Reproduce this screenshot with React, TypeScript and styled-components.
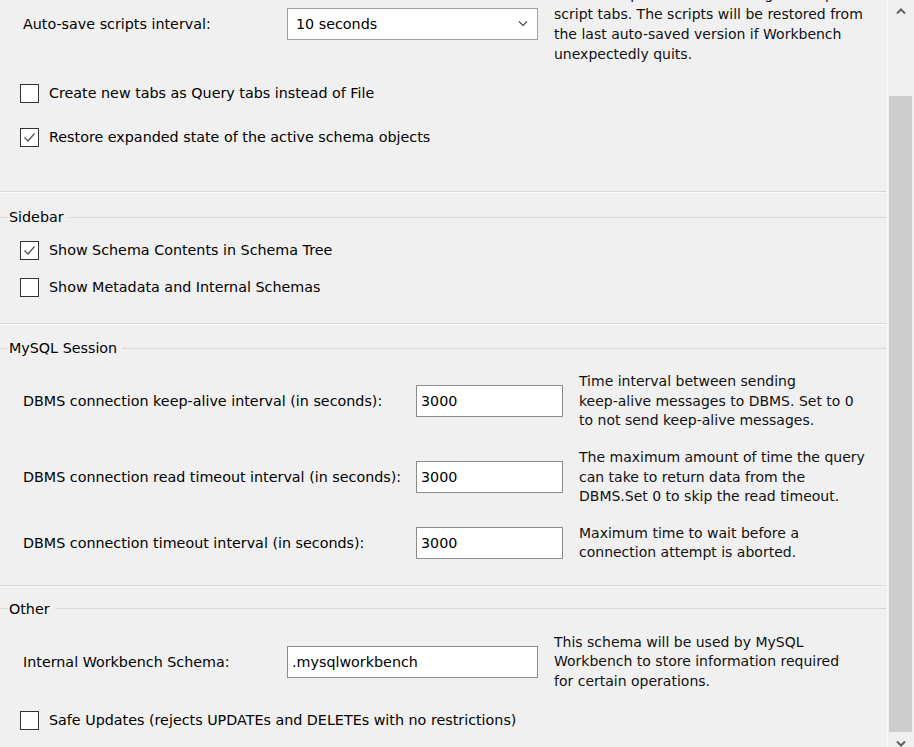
import React from "react";
import styled, { createGlobalStyle } from "styled-components";

const GlobalStyle = createGlobalStyle`
  html, body { margin: 0; padding: 0; background: #f0f0f0; overflow: hidden; }
  body {
    font-family: "DejaVu Sans", "Liberation Sans", sans-serif;
    font-size: 14.3px;
    color: #000;
  }
`;

const LINE = "#d9d9d9";

const Window = styled.div`
  display: flex;
  width: 914px;
  height: 755px;
  background: #f0f0f0;
`;

const Viewport = styled.div`
  flex: 1;
  min-width: 0;
  overflow: hidden;
`;

const Content = styled.div<{ $offset: number }>`
  margin-top: ${(p) => -p.$offset}px;
  width: 886px;
  display: flex;
  flex-direction: column;
`;

const Group = styled.section<{ $pb: number }>`
  display: flex;
  flex-direction: column;
  padding-bottom: ${(p) => p.$pb}px;
  border-bottom: 1px solid ${LINE};
  box-shadow: 0 1px 0 #fafafa;
`;

const GroupHeader = styled.div<{ $mt: number }>`
  display: flex;
  align-items: center;
  height: 20px;
  margin-top: ${(p) => p.$mt}px;
  &::before {
    content: "";
    width: 8px;
    border-top: 1px solid ${LINE};
  }
  &::after {
    content: "";
    flex: 1;
    border-top: 1px solid ${LINE};
  }
`;

const GroupTitle = styled.span`
  padding: 0 5px 0 1px;
  white-space: nowrap;
`;

const FormRow = styled.div<{ $mt: number; $label: number; $input: number }>`
  display: grid;
  grid-template-columns: ${(p) => p.$label}px ${(p) => p.$input}px 1fr;
  column-gap: 16px;
  align-items: center;
  padding-left: 23px;
  margin-top: ${(p) => p.$mt}px;
`;

const Label = styled.span`
  white-space: nowrap;
`;

const TextBox = styled.div`
  box-sizing: border-box;
  height: 32px;
  background: #fff;
  border: 1px solid #8a8a8a;
  display: flex;
  align-items: center;
  padding-left: 4px;
  white-space: nowrap;
`;

const ComboBox = styled(TextBox)`
  border-color: #a0a0a0;
  padding: 0 9px 0 8px;
  justify-content: space-between;
`;

const Description = styled.div<{ $lh: number }>`
  font-size: 14px;
  line-height: ${(p) => p.$lh}px;
  color: #111;
  & > span {
    display: block;
    white-space: nowrap;
  }
`;

const CheckRow = styled.label<{ $mt: number }>`
  display: flex;
  align-items: center;
  gap: 10px;
  height: 20px;
  padding-left: 20px;
  margin-top: ${(p) => p.$mt}px;
  white-space: nowrap;
`;

const Box = styled.span`
  box-sizing: border-box;
  width: 19px;
  height: 19px;
  border: 1px solid #333;
  background: #fff;
  display: flex;
  align-items: center;
  justify-content: center;
`;

const ScrollBar = styled.div`
  width: 27px;
  display: flex;
  flex-direction: column;
  background: #f0f0f0;
  border-left: 1px solid #f7f7f7;
  box-sizing: border-box;
`;

const ArrowButton = styled.div`
  height: 22px;
  display: flex;
  align-items: center;
  justify-content: center;
`;

const Track = styled.div`
  flex: 1;
  display: flex;
  flex-direction: column;
  padding: 0 2px 0 1px;
`;

const Thumb = styled.div<{ $top: number; $height: number }>`
  margin-top: ${(p) => p.$top}px;
  height: ${(p) => p.$height}px;
  background: #cdcdcd;
`;

const Check = ({ checked, children, mt }: { checked?: boolean; children: React.ReactNode; mt: number }) => (
  <CheckRow $mt={mt}>
    <Box>
      {checked && (
        <svg width="15" height="15" viewBox="0 0 15 15">
          <path d="M2.5 7.5 L6 11 L12.5 3.5" fill="none" stroke="#555" strokeWidth="1.3" />
        </svg>
      )}
    </Box>
    <span>{children}</span>
  </CheckRow>
);

const Desc = ({ lines, lh = 19.5 }: { lines: string[]; lh?: number }) => (
  <Description $lh={lh}>
    {lines.map((l) => (
      <span key={l}>{l}</span>
    ))}
  </Description>
);

const Chevron = ({ dir, color = "#606060", w = 2 }: { dir: "up" | "down"; color?: string; w?: number }) => (
  <svg width="10" height="6" viewBox="0 0 10 6">
    <path
      d={dir === "up" ? "M1 5.5 L5 1.5 L9 5.5" : "M1 0.5 L5 4.5 L9 0.5"}
      fill="none"
      stroke={color}
      strokeWidth={w}
    />
  </svg>
);

const sessionRows = [
  {
    label: "DBMS connection keep-alive interval (in seconds):",
    value: "3000",
    desc: ["Time interval between sending", "keep-alive messages to DBMS. Set to 0", "to not send keep-alive messages."],
    mt: 14,
  },
  {
    label: "DBMS connection read timeout interval (in seconds):",
    value: "3000",
    desc: ["The maximum amount of time the query", "can take to return data from the", "DBMS.Set 0 to skip the read timeout."],
    mt: 17.5,
  },
  {
    label: "DBMS connection timeout interval (in seconds):",
    value: "3000",
    desc: ["Maximum time to wait before a", "connection attempt is aborted."],
    mt: 17,
  },
];

export default function App() {
  return (
    <>
      <GlobalStyle />
      <Window>
        <Viewport>
          <Content $offset={16}>
            <Group $pb={44}>
              <FormRow $mt={0} $label={248} $input={251}>
                <Label>Auto-save scripts interval:</Label>
                <ComboBox>
                  <span>10 seconds</span>
                  <Chevron dir="down" color="#444" w={1.1} />
                </ComboBox>
                <Desc
                  lh={20}
                  lines={[
                    "interval to perform auto-saving of all open",
                    "script tabs. The scripts will be restored from",
                    "the last auto-saved version if Workbench",
                    "unexpectedly quits.",
                  ]}
                />
              </FormRow>
              <Check mt={19}>Create new tabs as Query tabs instead of File</Check>
              <Check mt={24} checked>
                Restore expanded state of the active schema objects
              </Check>
            </Group>

            <Group $pb={26}>
              <GroupHeader $mt={15}>
                <GroupTitle>Sidebar</GroupTitle>
              </GroupHeader>
              <Check mt={13} checked>
                Show Schema Contents in Schema Tree
              </Check>
              <Check mt={17}>Show Metadata and Internal Schemas</Check>
            </Group>

            <Group $pb={22}>
              <GroupHeader $mt={14}>
                <GroupTitle>MySQL Session</GroupTitle>
              </GroupHeader>
              {sessionRows.map((r) => (
                <FormRow key={r.label} $mt={r.mt} $label={377} $input={147}>
                  <Label>{r.label}</Label>
                  <TextBox>{r.value}</TextBox>
                  <Desc lines={r.desc} />
                </FormRow>
              ))}
            </Group>

            <Group $pb={40}>
              <GroupHeader $mt={13}>
                <GroupTitle>Other</GroupTitle>
              </GroupHeader>
              <FormRow $mt={14} $label={248} $input={251}>
                <Label>Internal Workbench Schema:</Label>
                <TextBox>.mysqlworkbench</TextBox>
                <Desc
                  lines={[
                    "This schema will be used by MySQL",
                    "Workbench to store information required",
                    "for certain operations.",
                  ]}
                />
              </FormRow>
              <Check mt={19}>Safe Updates (rejects UPDATEs and DELETEs with no restrictions)</Check>
            </Group>
          </Content>
        </Viewport>
        <ScrollBar>
          <ArrowButton>
            <Chevron dir="up" />
          </ArrowButton>
          <Track>
            <Thumb $top={74} $height={636} />
          </Track>
          <ArrowButton>
            <Chevron dir="down" />
          </ArrowButton>
        </ScrollBar>
      </Window>
    </>
  );
}
